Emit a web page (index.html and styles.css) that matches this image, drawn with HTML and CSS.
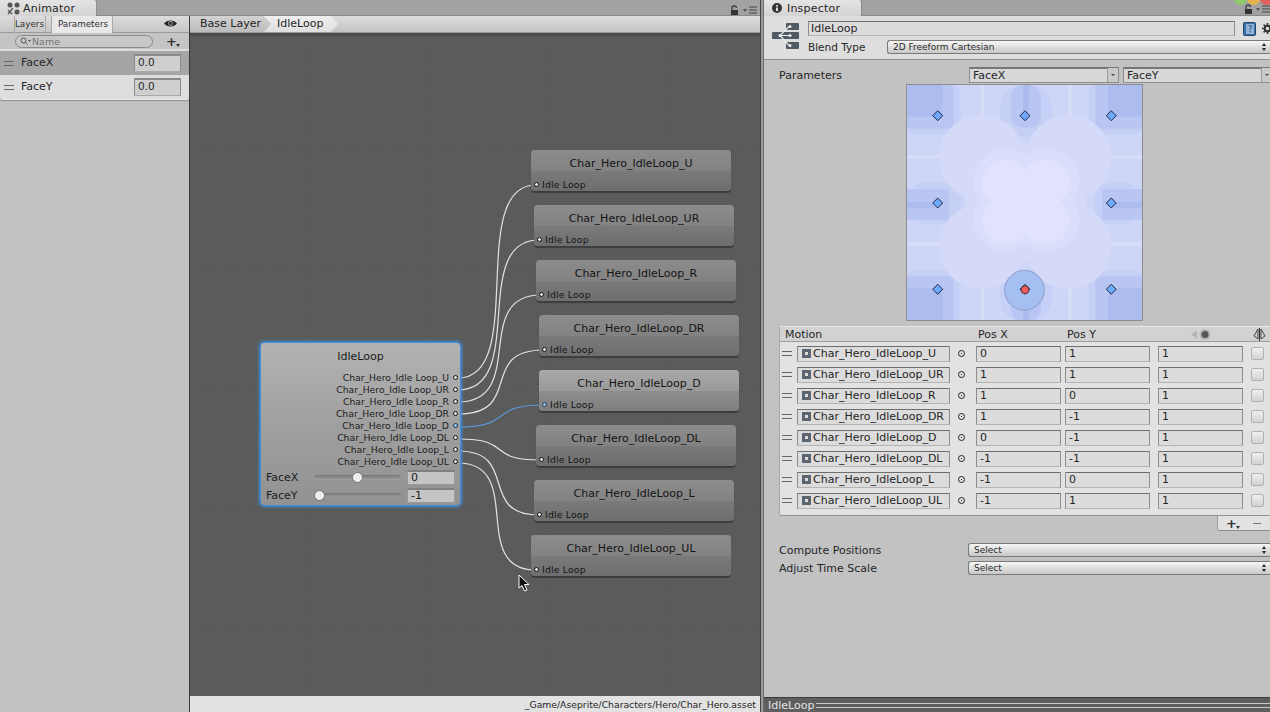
FILE: index.html
```html
<!DOCTYPE html>
<html lang="en">
<head>
    <meta charset="UTF-8">
    <title>Animator - IdleLoop</title>
    <link rel="stylesheet" href="styles.css">
</head>
<body>

<div class="window">

    <section class="animator">
        <div class="tab-strip">
            <div class="tab tab-animator">
                <svg class="tab-icon" width="13" height="13" viewBox="0 0 13 13"><circle cx="3" cy="3" r="2.500" fill="#555"/><circle cx="10" cy="3" r="2.500" fill="#555"/><circle cx="10" cy="10" r="2.500" fill="#555"/><path d="M1 12 L6 6 M1 8 L5 12" stroke="#555" stroke-width="1.300"/></svg>
                Animator
            </div>
            <div class="strip-tools">
                <svg width="9" height="10" viewBox="0 0 9 10"><path d="M2 5V3a2.200 2.200 0 0 1 4.400 0" fill="none" stroke="#333" stroke-width="1.200"/><rect x="1" y="5" width="7" height="5" fill="#333"/></svg>
                <svg width="14" height="8" viewBox="0 0 14 8"><path d="M0 3h4L2 6z" fill="#555"/><path d="M6 1h8M6 4h8M6 7h8" stroke="#444" stroke-width="1"/></svg>
            </div>
        </div>

        <div class="animator-body">
            <aside class="params">
                <div class="side-tabs">
                    <span class="side-tab">Layers</span>
                    <span class="side-tab side-tab-on">Parameters</span>
                    <svg class="eye" width="13" height="9" viewBox="0 0 13 9"><path d="M0 4.500C3 .5 10 .5 13 4.500C10 8.500 3 8.500 0 4.500z" fill="#222"/><circle cx="6.500" cy="4.500" r="2.400" fill="#999"/><circle cx="6.500" cy="4.500" r="1.200" fill="#111"/></svg>
                </div>
                <div class="search-row">
                    <div class="search-pill">
                        <svg width="11" height="8" viewBox="0 0 11 8"><circle cx="3.500" cy="3.500" r="2.500" fill="none" stroke="#555"/><path d="M5.500 5.500L7.500 7.500" stroke="#555"/><path d="M8 3h3L9.500 5z" fill="#555"/></svg>
                        <span>Name</span>
                    </div>
                    <span class="plus-menu">+<i></i></span>
                </div>
                <div class="param-row param-row-on">
                    <span class="grip"></span><span class="param-name">FaceX</span><span class="param-value">0.0</span>
                </div>
                <div class="param-row">
                    <span class="grip"></span><span class="param-name">FaceY</span><span class="param-value">0.0</span>
                </div>
            </aside>

            <div class="graph-pane">
                <div class="crumbs">
                    <span class="crumb">Base Layer</span>
                    <span class="crumb crumb-on">IdleLoop</span>
                </div>

                <div class="canvas">
                    <svg class="canvas-svg" width="570" height="662">
                        <defs>
                            <pattern id="grid" x="-1" y="-9" width="120" height="120" patternUnits="userSpaceOnUse">
                                <path d="M0.500 0V120M0 0.500H120" stroke="#484848" stroke-dasharray="1 11"/>
                            </pattern>
                        </defs>
                        <rect width="570" height="662" fill="url(#grid)"/>
                        <g class="wires">
                            <path d="M268 345C338 345 276 152 346 152"/>
                            <path d="M268 357C338 357 279 207 349 207"/>
                            <path d="M268 369C338 369 281 262 351 262"/>
                            <path d="M268 381C335 381 287 317 354 317"/>
                            <path class="wire-on" d="M268 394C325 394 297 372 354 372"/>
                            <path d="M268 406C325 406 294 427 351 427"/>
                            <path d="M268 418C330 418 287 482 349 482"/>
                            <path d="M268 430C336 430 278 537 346 537"/>
                        </g>
                    </svg>

                    <div class="blend-node">
                        <div class="blend-title">IdleLoop</div>
                        <div class="out-list">
                            <div class="out">Char_Hero_Idle Loop_U<i class="port"></i></div>
                            <div class="out">Char_Hero_Idle Loop_UR<i class="port"></i></div>
                            <div class="out">Char_Hero_Idle Loop_R<i class="port"></i></div>
                            <div class="out">Char_Hero_Idle Loop_DR<i class="port"></i></div>
                            <div class="out">Char_Hero_Idle Loop_D<i class="port port-on"></i></div>
                            <div class="out">Char_Hero_Idle Loop_DL<i class="port"></i></div>
                            <div class="out">Char_Hero_Idle Loop_L<i class="port"></i></div>
                            <div class="out">Char_Hero_Idle Loop_UL<i class="port"></i></div>
                        </div>
                        <div class="slide-row">
                            <span class="slide-label">FaceX</span>
                            <span class="slider"><i class="thumb thumb-mid"></i></span>
                            <span class="slide-value">0</span>
                        </div>
                        <div class="slide-row">
                            <span class="slide-label">FaceY</span>
                            <span class="slider"><i class="thumb"></i></span>
                            <span class="slide-value">-1</span>
                        </div>
                    </div>

                    <div class="clip-node n-u"><div class="clip-title">Char_Hero_IdleLoop_U</div><div class="clip-in"><i class="port"></i>Idle Loop</div></div>
                    <div class="clip-node n-ur"><div class="clip-title">Char_Hero_IdleLoop_UR</div><div class="clip-in"><i class="port"></i>Idle Loop</div></div>
                    <div class="clip-node n-r"><div class="clip-title">Char_Hero_IdleLoop_R</div><div class="clip-in"><i class="port"></i>Idle Loop</div></div>
                    <div class="clip-node n-dr"><div class="clip-title">Char_Hero_IdleLoop_DR</div><div class="clip-in"><i class="port"></i>Idle Loop</div></div>
                    <div class="clip-node n-d clip-on"><div class="clip-title">Char_Hero_IdleLoop_D</div><div class="clip-in"><i class="port port-on"></i>Idle Loop</div></div>
                    <div class="clip-node n-dl"><div class="clip-title">Char_Hero_IdleLoop_DL</div><div class="clip-in"><i class="port"></i>Idle Loop</div></div>
                    <div class="clip-node n-l"><div class="clip-title">Char_Hero_IdleLoop_L</div><div class="clip-in"><i class="port"></i>Idle Loop</div></div>
                    <div class="clip-node n-ul"><div class="clip-title">Char_Hero_IdleLoop_UL</div><div class="clip-in"><i class="port"></i>Idle Loop</div></div>

                    <svg class="cursor" width="13" height="18" viewBox="0 0 13 18"><path d="M1 1V14L4 11.500L6.500 17L9 16L6.500 10.500H11z" fill="#111" stroke="#fff"/></svg>
                </div>

                <div class="status">_Game/Aseprite/Characters/Hero/Char_Hero.asset</div>
            </div>
        </div>
    </section>

    <div class="splitter"></div>

    <section class="inspector">
        <div class="tab-strip">
            <div class="tab tab-inspector">
                <svg class="tab-icon" width="10" height="10" viewBox="0 0 10 10"><circle cx="5" cy="5" r="5" fill="#333"/><path d="M4 2h2v1.500H4zM4 4.500h2V8H4z" fill="#ddd"/></svg>
                Inspector
            </div>
            <div class="traffic">
                <i class="light light-g"></i><i class="light light-y"></i><i class="light light-r"></i>
            </div>
            <div class="strip-tools strip-tools-insp">
                <svg width="9" height="10" viewBox="0 0 9 10"><path d="M2 5V3a2.200 2.200 0 0 1 4.400 0" fill="none" stroke="#333" stroke-width="1.200"/><rect x="1" y="5" width="7" height="5" fill="#333"/></svg>
                <svg width="14" height="8" viewBox="0 0 14 8"><path d="M0 3h4L2 6z" fill="#555"/><path d="M6 1h8M6 4h8M6 7h8" stroke="#444" stroke-width="1"/></svg>
            </div>
        </div>

        <div class="asset-head">
            <svg class="tree-icon" width="27" height="27" viewBox="0 0 27 27">
                <rect x="0" y="10" width="27" height="7" rx="1" fill="#4f5a64"/>
                <rect x="14" y="1" width="13" height="7" rx="1" fill="#4f5a64"/>
                <rect x="14" y="20" width="13" height="7" rx="1" fill="#4f5a64"/>
                <path d="M8 13.500L17 4.500M8 13.500H17M8 13.500L17 23.500" stroke="#e8e8e8" stroke-width="1.200" fill="none"/>
                <circle cx="8" cy="13.500" r="1.500" fill="#eee"/><circle cx="18" cy="4.500" r="1.500" fill="#eee"/><circle cx="18" cy="13.500" r="1.500" fill="#eee"/><circle cx="18" cy="23.500" r="1.500" fill="#eee"/>
            </svg>
            <div class="asset-fields">
                <div class="asset-name-row">
                    <div class="field asset-name">IdleLoop</div>
                    <svg class="book" width="13" height="14" viewBox="0 0 13 14"><rect x="0.500" y="0.500" width="12" height="13" rx="1" fill="#3c6fa8" stroke="#23476f"/><rect x="3" y="2" width="8" height="10" fill="#8fb2d8"/><text x="5" y="10" class="book-q">?</text></svg>
                    <svg class="gear" width="11" height="11" viewBox="0 0 11 11"><circle cx="5.500" cy="5.500" r="2.800" fill="none" stroke="#333" stroke-width="2"/><path d="M5.500 0V11M0 5.500H11M1.600 1.600L9.400 9.400M9.400 1.600L1.600 9.400" stroke="#333" stroke-width="1.600" stroke-dasharray="2 7"/></svg>
                </div>
                <div class="blend-type-row">
                    <span class="blend-type-label">Blend Type</span>
                    <div class="popup">2D Freeform Cartesian</div>
                </div>
            </div>
        </div>

        <div class="insp-body">
            <div class="param-pick">
                <span class="param-pick-label">Parameters</span>
                <div class="combo combo-x">FaceX<i></i></div>
                <div class="combo combo-y">FaceY<i></i></div>
            </div>

            <svg class="blend-map" width="237" height="237" viewBox="0 0 237 237">
                <rect width="237" height="237" fill="#ced6f7"/>
                <g fill="#d9def9">
                    <rect x="75" width="3" height="237"/><rect x="163" width="3" height="237"/>
                    <rect y="71" width="237" height="3"/><rect y="159" width="237" height="3"/>
                </g>
                <g fill="#c6cff5">
                    <rect width="54" height="50" rx="6"/><rect x="183" width="54" height="50" rx="6"/>
                    <rect y="187" width="54" height="50" rx="6"/><rect x="183" y="187" width="54" height="50" rx="6"/>
                    <rect x="94" width="52" height="52" rx="22"/><rect x="94" y="186" width="52" height="52" rx="22"/>
                    <rect y="98" width="56" height="42" rx="20" /><rect x="188" y="98" width="49" height="42" rx="20"/>
                </g>
                <g fill="#b9c6f3">
                    <rect width="47" height="44"/><rect x="190" width="47" height="44"/>
                    <rect y="193" width="47" height="44"/><rect x="190" y="193" width="47" height="44"/>
                    <rect x="105" width="30" height="43" rx="12"/><rect x="105" y="195" width="30" height="43" rx="12"/>
                    <rect y="105" width="42" height="31"/><rect x="197" y="105" width="40" height="31"/>
                </g>
                <g fill="#adbcee">
                    <rect width="36" height="32"/><rect x="203" width="34" height="32"/>
                    <rect y="205" width="36" height="32"/><rect x="203" y="205" width="34" height="32"/>
                    <rect x="117" width="6" height="32"/><rect x="117" y="205" width="6" height="32"/>
                    <rect y="118" width="32" height="6"/><rect x="205" y="118" width="32" height="6"/>
                </g>
                <g fill="#d5daf9">
                    <circle cx="75" cy="73" r="43"/><circle cx="163" cy="73" r="43"/>
                    <circle cx="75" cy="163" r="43"/><circle cx="163" cy="163" r="43"/>
                    <rect x="60" y="60" width="120" height="118"/>
                </g>
                <g fill="#dbdefb">
                    <circle cx="100" cy="97" r="33"/><circle cx="141" cy="97" r="33"/>
                    <circle cx="100" cy="135" r="33"/><circle cx="141" cy="135" r="33"/>
                </g>
                <g fill="#e1e3fc">
                    <circle cx="100" cy="99" r="24"/><circle cx="140" cy="99" r="24"/>
                    <circle cx="100" cy="137" r="24"/><circle cx="140" cy="137" r="24"/>
                    <rect x="100" y="100" width="40" height="36"/>
                </g>
                <circle cx="118.500" cy="207" r="20" fill="#a6bff3" stroke="#8d9cc5"/>
                <g fill="#6eaaff" stroke="#15192a" stroke-width=".9">
                    <path d="M31 26L36 31L31 36L26 31z"/><path d="M119 26L124 31L119 36L114 31z"/><path d="M206 26L211 31L206 36L201 31z"/>
                    <path d="M31 114L36 119L31 124L26 119z"/><path d="M206 114L211 119L206 124L201 119z"/>
                    <path d="M31 201L36 206L31 211L26 206z"/><path d="M119 201L124 206L119 211L114 206z"/><path d="M206 201L211 206L206 211L201 206z"/>
                </g>
                <circle cx="119" cy="206.500" r="4" fill="#f15a5a" stroke="#222" stroke-width=".7"/>
            </svg>

            <div class="motion-list">
                <div class="motion-head">
                    <span class="col-motion">Motion</span>
                    <span class="col-x">Pos X</span>
                    <span class="col-y">Pos Y</span>
                    <svg class="col-clock" width="20" height="11" viewBox="0 0 20 11"><path d="M0 5.500L6 1V10z" fill="#b4b4b4"/><circle cx="14" cy="5.500" r="5.500" fill="#b4b4b4"/><circle cx="14" cy="5.500" r="3.500" fill="#555"/></svg>
                    <svg class="col-mirror" width="13" height="13" viewBox="0 0 13 13"><path d="M6.500 0V13" stroke="#333"/><path d="M5 1L1 8L5 11zM8 1L12 8L8 11z" fill="none" stroke="#444"/></svg>
                </div>

                <div class="motion-row"><span class="grip"></span><div class="field clip-field"><i class="clip-icon"></i>Char_Hero_IdleLoop_U</div><i class="pick-dot"></i><div class="field num">0</div><div class="field num">1</div><div class="field num num-last">1</div><i class="check"></i></div>
                <div class="motion-row"><span class="grip"></span><div class="field clip-field"><i class="clip-icon"></i>Char_Hero_IdleLoop_UR</div><i class="pick-dot"></i><div class="field num">1</div><div class="field num">1</div><div class="field num num-last">1</div><i class="check"></i></div>
                <div class="motion-row"><span class="grip"></span><div class="field clip-field"><i class="clip-icon"></i>Char_Hero_IdleLoop_R</div><i class="pick-dot"></i><div class="field num">1</div><div class="field num">0</div><div class="field num num-last">1</div><i class="check"></i></div>
                <div class="motion-row"><span class="grip"></span><div class="field clip-field"><i class="clip-icon"></i>Char_Hero_IdleLoop_DR</div><i class="pick-dot"></i><div class="field num">1</div><div class="field num">-1</div><div class="field num num-last">1</div><i class="check"></i></div>
                <div class="motion-row"><span class="grip"></span><div class="field clip-field"><i class="clip-icon"></i>Char_Hero_IdleLoop_D</div><i class="pick-dot"></i><div class="field num">0</div><div class="field num">-1</div><div class="field num num-last">1</div><i class="check"></i></div>
                <div class="motion-row"><span class="grip"></span><div class="field clip-field"><i class="clip-icon"></i>Char_Hero_IdleLoop_DL</div><i class="pick-dot"></i><div class="field num">-1</div><div class="field num">-1</div><div class="field num num-last">1</div><i class="check"></i></div>
                <div class="motion-row"><span class="grip"></span><div class="field clip-field"><i class="clip-icon"></i>Char_Hero_IdleLoop_L</div><i class="pick-dot"></i><div class="field num">-1</div><div class="field num">0</div><div class="field num num-last">1</div><i class="check"></i></div>
                <div class="motion-row"><span class="grip"></span><div class="field clip-field"><i class="clip-icon"></i>Char_Hero_IdleLoop_UL</div><i class="pick-dot"></i><div class="field num">-1</div><div class="field num">1</div><div class="field num num-last">1</div><i class="check"></i></div>
            </div>

            <div class="list-foot">
                <div class="foot-tab"><span class="plus-menu">+<i></i></span><span class="minus"></span></div>
            </div>

            <div class="action-row">
                <span class="action-label">Compute Positions</span>
                <div class="popup popup-small">Select</div>
            </div>
            <div class="action-row">
                <span class="action-label">Adjust Time Scale</span>
                <div class="popup popup-small">Select</div>
            </div>
        </div>

        <div class="preview-bar">
            <span>IdleLoop</span>
            <i class="preview-lines"></i>
        </div>
    </section>

</div>

</body>
</html>
```

FILE: styles.css
```css
* {
    box-sizing: border-box;
}
body {
    margin: 0;
    background-color: #c2c2c2;
    font-family: "DejaVu Sans", sans-serif;
    font-size: 11px;
    color: #262626;
    overflow: hidden;
}
.window {
    display: flex;
    width: 1270px;
    height: 712px;
    overflow: hidden;
}

/* window tabs */
.tab-strip {
    position: relative;
    display: flex;
    justify-content: space-between;
    height: 16px;
    background-color: #a2a2a2;
    border-bottom: 1px solid #8a8a8a;
}
.tab {
    display: flex;
    align-items: center;
    height: 16px;
    background: linear-gradient(#e4e4e4, #d4d4d4);
    border-right: 1px solid #8c8c8c;
    border-top-right-radius: 3px;
    font-size: 11px;
    letter-spacing: 0.2px;
}
.tab-animator {
    width: 97px;
    padding-left: 7px;
    gap: 3px;
}
.tab-inspector {
    width: 98px;
    padding-left: 8px;
    gap: 5px;
}
.strip-tools {
    display: flex;
    align-items: center;
    gap: 4px;
    padding: 4px 3px 0 0;
}
.strip-tools-insp {
    position: absolute;
    right: 0;
    top: 3px;
    padding: 1px 0 0;
    gap: 3px;
}
.traffic {
    position: absolute;
    right: -3px;
    top: -8px;
    display: flex;
}
.light {
    width: 13px;
    height: 13px;
    border-radius: 50%;
}
.light-g {
    background-color: #8ccb6a;
}
.light-y {
    background-color: #e8b24a;
}
.light-r {
    background-color: #e0605a;
}

/* animator */
.animator {
    display: flex;
    flex-direction: column;
    width: 760px;
}
.animator-body {
    display: flex;
    flex: 1;
    min-height: 0;
}
.params {
    width: 190px;
    background-color: #c2c2c2;
    border-right: 1px solid #3a3a3a;
}
.side-tabs {
    position: relative;
    display: flex;
    gap: 5px;
    height: 17px;
    padding-left: 14px;
    background: linear-gradient(#dcdcdc, #c6c6c6);
    border-bottom: 1px solid #9a9a9a;
}
.side-tab {
    height: 17px;
    line-height: 17px;
    padding: 0 1px 0 0;
    font-size: 8.750px;
    color: #333;
    border-left: 1px solid #a8a8a8;
    border-right: 1px solid #a8a8a8;
}
.side-tab-on {
    width: 62px;
    padding-left: 6px;
    background-color: #e8e8e8;
}
.eye {
    position: absolute;
    left: 164px;
    top: 3px;
}
.search-row {
    display: flex;
    align-items: center;
    height: 18px;
    padding-left: 15px;
    background-color: #c4c4c4;
    border-bottom: 2px solid #dedede;
}
.search-pill {
    display: flex;
    align-items: center;
    gap: 1px;
    width: 138px;
    height: 13px;
    padding-left: 4px;
    background-color: #c8c8c8;
    border: 1px solid #8a8a8a;
    border-radius: 7px;
    font-size: 9.500px;
    color: #777;
}
.plus-menu {
    position: relative;
    margin-left: 13px;
    font-size: 13px;
    font-weight: bold;
    line-height: 13px;
    color: #333;
}
.plus-menu i {
    position: absolute;
    right: -3px;
    bottom: 1px;
    width: 0;
    height: 0;
    border: 2px solid transparent;
    border-top: 3px solid #333;
    border-bottom: 0;
}
.param-row {
    display: flex;
    align-items: center;
    height: 24px;
    padding-left: 4px;
    background-color: #dedede;
    font-size: 11px;
}
.param-row:last-child {
    height: 25px;
    border-bottom: 1px solid #ededed;
    box-shadow: 0 1px 1px #8c8c8c;
    border-radius: 0 0 3px 3px;
}
.param-row-on {
    background-color: #a5a5a5;
}
.grip {
    flex: none;
    width: 10px;
    height: 5px;
    border-top: 1px solid #666;
    border-bottom: 1px solid #666;
}
.param-name {
    width: 113px;
    margin-left: 7px;
    padding-bottom: 2px;
}
.param-value {
    width: 47px;
    height: 18px;
    line-height: 13px;
    padding-left: 3px;
    background-color: #cfcfcf;
    border: 1px solid #8a8a8a;
    border-bottom-color: #a8a8a8;
    border-top-width: 2px;
    font-size: 10.500px;
}

/* graph */
.graph-pane {
    display: flex;
    flex-direction: column;
    flex: 1;
    min-width: 0;
}
.crumbs {
    display: flex;
    height: 17px;
    background: linear-gradient(#dcdcdc, #c4c4c4);
    border-bottom: 1px solid #9a9a9a;
}
.crumb {
    position: relative;
    flex: none;
    height: 16px;
    line-height: 16px;
    padding: 0 10px;
    white-space: nowrap;
    background: linear-gradient(#d2d2d2, #bcbcbc);
    clip-path: polygon(0 0, calc(100% - 7px) 0, 100% 50%, calc(100% - 7px) 100%, 0 100%);
}
.crumb:first-child {
    width: 81px;
}
.crumb-on {
    width: 74px;
    margin-left: -7px;
    padding-left: 13px;
    background: linear-gradient(#f0f0f0, #dedede);
    clip-path: polygon(0 0, calc(100% - 7px) 0, 100% 50%, calc(100% - 7px) 100%, 0 100%, 7px 50%);
}
.canvas {
    position: relative;
    flex: 1;
    background-color: #5b5b5b;
    box-shadow: inset 0 4px 2px -1px #4a4a4a;
    overflow: hidden;
}
.canvas-svg {
    position: absolute;
    left: 0;
    top: 0;
}
.wires path {
    fill: none;
    stroke: #e4e4e4;
    stroke-width: 1.200;
}
.wires .wire-on {
    stroke: #5c97d6;
}
.port {
    flex: none;
    display: block;
    width: 5px;
    height: 5px;
    background-color: #e8e8e8;
    border: 1px solid #111;
    border-radius: 50%;
}
.port-on {
    background-color: #9cc4ea;
    border-color: #1c3552;
}

/* blend tree node, free canvas */
.blend-node {
    position: absolute;
    left: 70px;
    top: 309px;
    width: 201px;
    height: 164px;
    padding: 0 2px 0 2px;
    background: linear-gradient(#b2b2b2, #a8a8a8 30%, #9e9e9e 55%, #929292);
    border: 1px solid #3e8fe0;
    border-radius: 4px;
    box-shadow: 0 0 3px 1px #3f8dd8;
    color: #1c1c1c;
}
.blend-title {
    height: 25px;
    padding-top: 7px;
    text-align: center;
    font-size: 11px;
    line-height: 13px;
}
.out-list {
    margin-top: 3px;
}
.out {
    display: flex;
    justify-content: flex-end;
    align-items: center;
    gap: 4px;
    height: 12px;
    font-size: 9.250px;
}
.slide-row {
    display: flex;
    align-items: center;
    height: 18px;
    padding-left: 3px;
}
.out-list + .slide-row {
    margin-top: 1px;
}
.slide-label {
    width: 48px;
    font-size: 11px;
}
.slider {
    position: relative;
    width: 87px;
    height: 5px;
    background: linear-gradient(#777, #a0a0a0);
    border-radius: 3px;
}
.thumb {
    position: absolute;
    left: 0;
    top: -3px;
    width: 11px;
    height: 11px;
    background-color: #eee;
    border: 1px solid #6e6e6e;
    border-radius: 50%;
}
.thumb-mid {
    left: 38px;
}
.slide-value {
    width: 48px;
    height: 15px;
    margin-left: 6px;
    padding-left: 3px;
    line-height: 12px;
    background-color: #c4c4c4;
    border: 1px solid #9a9a9a;
    border-top: 2px solid #808080;
    font-size: 11px;
}

/* clip nodes */
.clip-node {
    position: absolute;
    width: 200px;
    height: 41px;
    background-color: #727272;
    border-radius: 4px;
    box-shadow: 0 2px 1px #3c3c3c;
    color: #141414;
}
.clip-title {
    height: 21px;
    padding-top: 7px;
    text-align: center;
    line-height: 13px;
    background: linear-gradient(#8c8c8c, #828282);
    border-radius: 4px 4px 0 0;
}
.clip-in {
    display: flex;
    align-items: center;
    gap: 3px;
    height: 20px;
    padding: 7px 0 0 3px;
    font-size: 9.250px;
    letter-spacing: 0.2px;
    background: linear-gradient(#7a7a7a, #6e6e6e);
    border-radius: 0 0 4px 4px;
}
.clip-on .clip-title {
    background: linear-gradient(#a8a8a8, #9a9a9a);
}
.clip-on .clip-in {
    background: linear-gradient(#8e8e8e, #7e7e7e);
}
.n-u { left: 341px; top: 117px; }
.n-ur { left: 344px; top: 172px; }
.n-r { left: 346px; top: 227px; }
.n-dr { left: 349px; top: 282px; }
.n-d { left: 349px; top: 337px; }
.n-dl { left: 346px; top: 392px; }
.n-l { left: 344px; top: 447px; }
.n-ul { left: 341px; top: 502px; }
.cursor {
    position: absolute;
    left: 328px;
    top: 541px;
}
.status {
    height: 16px;
    padding-right: 4px;
    background-color: #e2e2e2;
    text-align: right;
    font-size: 9.250px;
    line-height: 18px;
}
.splitter {
    flex: none;
    width: 4px;
    background: linear-gradient(90deg, #454545 1px, #9a9a9a 1px, #9a9a9a 3px, #6e6e6e 3px);
}

/* inspector */
.inspector {
    display: flex;
    flex-direction: column;
    flex: 1;
    min-width: 0;
    overflow: hidden;
}
.asset-head {
    display: flex;
    height: 44px;
    padding: 5px 0 0 8px;
    background-color: #dedede;
    border-bottom: 1px solid #8e8e8e;
}
.tree-icon {
    flex: none;
    margin-top: 1px;
}
.asset-fields {
    flex: 1;
    margin-left: 9px;
    min-width: 0;
}
.asset-name-row {
    display: flex;
    align-items: center;
}
.field {
    background-color: #dcdcdc;
    border: 1px solid #8e8e8e;
    border-top-color: #6e6e6e;
    border-bottom-color: #b4b4b4;
    white-space: nowrap;
}
.asset-name {
    flex: none;
    width: 427px;
    height: 15px;
    line-height: 13px;
    padding-left: 2px;
}
.book {
    flex: none;
    margin-left: 8px;
}
.book-q {
    font-size: 8px;
    fill: #1d3f66;
}
.gear {
    flex: none;
    margin-left: 6px;
}
.blend-type-row {
    display: flex;
    align-items: center;
    margin-top: 4px;
}
.blend-type-label {
    width: 79px;
    font-size: 10.500px;
}
.popup {
    position: relative;
    flex: 1;
    height: 14px;
    padding-left: 5px;
    line-height: 12px;
    font-size: 9px;
    color: #2a2a2a;
    background: linear-gradient(#f6f6f6, #dcdcdc 55%, #c8c8c8);
    border: 1px solid #7a7a7a;
    border-right: 0;
    border-radius: 3px 0 0 3px;
}
.popup::before, .popup::after {
    content: "";
    position: absolute;
    right: 4px;
    width: 0;
    height: 0;
    border: 2px solid transparent;
}
.popup::before {
    top: 2px;
    border-bottom: 3px solid #222;
    border-top: 0;
}
.popup::after {
    top: 7px;
    border-top: 3px solid #222;
    border-bottom: 0;
}
.insp-body {
    flex: 1;
    padding: 0 0 0 15px;
    background-color: #c2c2c2;
}
.param-pick {
    display: flex;
    align-items: center;
    height: 24px;
    padding-top: 6px;
}
.param-pick-label {
    flex: none;
    width: 190px;
}
.combo {
    position: relative;
    flex: none;
    height: 16px;
    line-height: 13px;
    padding-left: 3px;
    background-color: #d8d8d8;
    border: 1px solid #8e8e8e;
    border-top: 2px solid #777;
}
.combo i {
    position: absolute;
    right: 0;
    top: -1px;
    width: 11px;
    height: 14px;
    background-color: #cacaca;
    border-left: 1px solid #9a9a9a;
}
.combo i::after {
    content: "";
    position: absolute;
    left: 3px;
    top: 6px;
    border: 2px solid transparent;
    border-top: 2px solid #444;
    border-bottom: 0;
}
.combo-x {
    width: 150px;
}
.combo-y {
    width: 150px;
    margin-left: 4px;
}
.blend-map {
    display: block;
    margin: 0 0 0 127px;
    border: 1px solid #8e8e8e;
}
.motion-list {
    width: 491px;
    height: 190px;
    margin-top: 5px;
    background-color: #e2e2e2;
    border-radius: 3px 0 0 3px;
    border-left: 1px solid #a8a8a8;
    border-top: 1px solid #e8e8e8;
    border-bottom: 1px solid #8e8e8e;
}
.motion-head {
    position: relative;
    display: flex;
    align-items: center;
    height: 15px;
    margin-bottom: 1px;
    padding-left: 5px;
    background-color: #d2d2d2;
    border-bottom: 1px solid #9e9e9e;
}
.col-motion {
    width: 193px;
}
.col-x {
    width: 89px;
}
.col-clock {
    position: absolute;
    left: 411px;
    top: 2px;
}
.col-mirror {
    position: absolute;
    left: 473px;
    top: 1px;
}
.motion-row {
    display: flex;
    align-items: center;
    height: 21px;
    padding-left: 2px;
}
.clip-field {
    display: flex;
    align-items: center;
    gap: 2px;
    width: 153px;
    height: 16px;
    margin-left: 5px;
    padding-left: 4px;
}
.clip-icon {
    flex: none;
    width: 9px;
    height: 9px;
    background: radial-gradient(circle, #ddd 1.500px, #5c6670 2px);
}
.pick-dot {
    flex: none;
    width: 7px;
    height: 7px;
    margin: 0 11px 0 8px;
    border: 1px solid #222;
    border-radius: 50%;
    background: radial-gradient(circle, #222 0.800px, #e2e2e2 1px);
}
.num {
    flex: none;
    width: 85px;
    height: 16px;
    margin-right: 4px;
    padding-left: 3px;
    line-height: 13px;
}
.num-last {
    margin: 0 8px 0 4px;
}
.check {
    flex: none;
    width: 13px;
    height: 13px;
    background: linear-gradient(#efefef, #d2d2d2);
    border: 1px solid #b0b0b0;
    border-radius: 2px;
}
.list-foot {
    display: flex;
    justify-content: flex-end;
    height: 16px;
}
.foot-tab {
    display: flex;
    align-items: center;
    width: 53px;
    height: 15px;
    padding-left: 8px;
    background-color: #e2e2e2;
    border-left: 1px solid #9e9e9e;
    border-bottom: 1px solid #8e8e8e;
    border-radius: 0 0 0 3px;
}
.foot-tab .plus-menu {
    margin-left: 0;
}
.minus {
    width: 8px;
    height: 1px;
    margin-left: 16px;
    background-color: #777;
}
.action-row {
    display: flex;
    align-items: center;
    height: 18px;
}
.list-foot + .action-row {
    margin-top: 9px;
}
.action-label {
    width: 189px;
    flex: none;
}
.popup-small {
    height: 14px;
}
.preview-bar {
    display: flex;
    align-items: center;
    height: 15px;
    padding-left: 4px;
    background-color: #5e5e5e;
    border-top: 1px solid #3c3c3c;
    color: #e2e2e2;
    font-size: 11px;
}
.preview-lines {
    flex: 1;
    height: 5px;
    margin-left: 2px;
    border-top: 1px solid #c8c8c8;
    border-bottom: 1px solid #c8c8c8;
}
```
